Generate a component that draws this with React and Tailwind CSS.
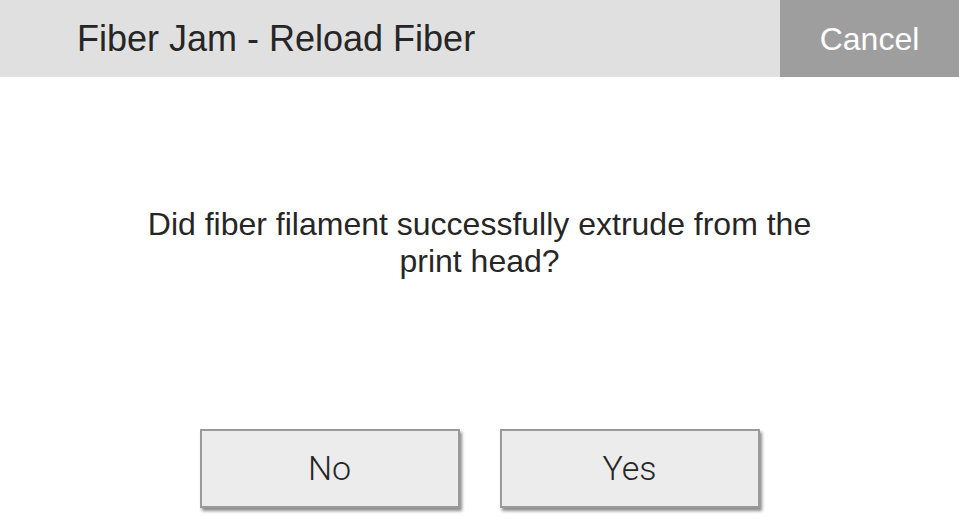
export default function App() {
  const font = { fontFamily: '"Liberation Sans", Arial, sans-serif' };
  const light = { fontFamily: 'Roboto, "Liberation Sans", sans-serif' };
  return (
    <div className="w-[959px] h-[528px] bg-white flex flex-col overflow-hidden rounded-bl-[10px]" style={font}>
      <div className="h-[77px] flex bg-[#e0e0e0]">
        <div className="flex-1 flex items-center pl-[77px] text-[36px] text-[#262626]">Fiber Jam - Reload Fiber</div>
        <div className="w-[179px] bg-[#9e9e9e] flex items-center justify-center text-[32px] text-white">Cancel</div>
      </div>
      <div className="flex-1 flex items-center justify-center pb-[20px]">
        <p className="text-[32px] leading-[37px] text-[#262626] text-center w-[700px]">
          Did fiber filament successfully extrude from the print head?
        </p>
      </div>
      <div className="flex justify-center gap-[40px] pb-[20px]">
        <button className="w-[260px] h-[79px] bg-[#ececec] border-2 border-[#9a9a9a] shadow-[2px_3px_3px_rgba(0,0,0,0.45)] text-[34px] font-light text-[#262626]" style={light}>No</button>
        <button className="w-[260px] h-[79px] bg-[#ececec] border-2 border-[#9a9a9a] shadow-[2px_3px_3px_rgba(0,0,0,0.45)] text-[34px] font-light text-[#262626]" style={light}>Yes</button>
      </div>
    </div>
  );
}
